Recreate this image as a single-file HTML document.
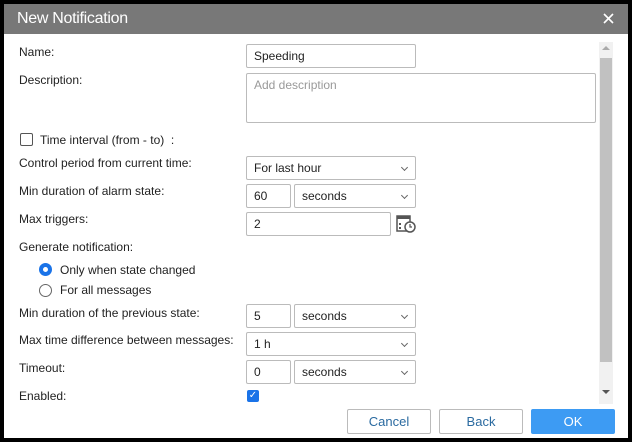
<!DOCTYPE html>
<html><head><style>
*{box-sizing:border-box;margin:0;padding:0}
body{width:632px;height:442px;background:#000;font-family:"Liberation Sans",Arial,sans-serif;font-size:12px;color:#222;position:relative;overflow:hidden}
.win{position:absolute;left:4px;top:4px;width:624px;height:434px;background:#fff}
.title{position:absolute;left:0;top:0;width:624px;height:30px;background:#787878;color:#fff;font-size:16px;line-height:29px;padding-left:13px;letter-spacing:-0.3px}
.a{position:absolute}
.lbl{position:absolute;left:15px;line-height:14px}
.in{position:absolute;border:1px solid #bbb;border-radius:2px;height:24px;line-height:22px;padding-left:7px;background:#fff}
.sel::after{content:"";position:absolute;right:8px;top:8px;width:4px;height:4px;border-right:1px solid #666;border-bottom:1px solid #666;transform:rotate(45deg)}
.btn{position:absolute;top:405px;width:84px;height:25px;border:1px solid #bbb;border-radius:2px;text-align:center;line-height:23px;color:#2a6aa0;font-size:13px}
.rad{position:absolute;width:13px;height:13px;border:1px solid #666;border-radius:50%}
</style></head><body>
<div class="win">
<div class="title">New Notification</div>
<svg class="a" style="left:599px;top:9px" width="11" height="11" viewBox="0 0 11 11"><path d="M1 1L10 10M10 1L1 10" stroke="#fff" stroke-width="1.6"/></svg>
<div class="lbl" style="top:41px">Name:</div>
<div class="in" style="left:242px;top:40px;width:170px">Speeding</div>
<div class="lbl" style="top:69px">Description:</div>
<div class="in" style="left:242px;top:69px;width:350px;height:50px;color:#999">Add description</div>
<div class="a" style="left:16px;top:129px;width:13px;height:13px;border:1px solid #555;border-radius:2px"></div>
<div class="lbl" style="left:36px;top:129px">Time interval (from - to) &nbsp;:</div>
<div class="lbl" style="top:152px">Control period from current time:</div>
<div class="in sel" style="left:242px;top:152px;width:170px">For last hour</div>
<div class="lbl" style="top:180px">Min duration of alarm state:</div>
<div class="in" style="left:242px;top:180px;width:45px">60</div>
<div class="in sel" style="left:290px;top:180px;width:122px">seconds</div>
<div class="lbl" style="top:208px">Max triggers:</div>
<div class="in" style="left:242px;top:208px;width:145px">2</div>
<svg class="a" style="left:392px;top:210px" width="20" height="20" viewBox="0 0 20 20"><rect x="1" y="2" width="13" height="15" fill="#fff" stroke="#555" stroke-width="1.5"/><rect x="1" y="2" width="13" height="3" fill="#555"/><rect x="3" y="9" width="2" height="2" fill="#555"/><rect x="3" y="13" width="2" height="2" fill="#555"/><circle cx="14" cy="13" r="5" fill="#fff" stroke="#555" stroke-width="1.5"/><path d="M14 10v3h2" stroke="#555" fill="none" stroke-width="1.2"/></svg>
<div class="lbl" style="top:236px">Generate notification:</div>
<div class="rad" style="left:35px;top:259px;border:4px solid #1a73e8"></div>
<div class="lbl" style="left:56px;top:259px">Only when state changed</div>
<div class="rad" style="left:35px;top:280px"></div>
<div class="lbl" style="left:56px;top:279px">For all messages</div>
<div class="lbl" style="top:302px">Min duration of the previous state:</div>
<div class="in" style="left:242px;top:300px;width:45px">5</div>
<div class="in sel" style="left:290px;top:300px;width:122px">seconds</div>
<div class="lbl" style="top:329px">Max time difference between messages:</div>
<div class="in sel" style="left:242px;top:328px;width:170px">1 h</div>
<div class="lbl" style="top:357px">Timeout:</div>
<div class="in" style="left:242px;top:356px;width:45px">0</div>
<div class="in sel" style="left:290px;top:356px;width:122px">seconds</div>
<div class="lbl" style="top:385px">Enabled:</div>
<div class="a" style="left:243px;top:386px;width:12px;height:12px;background:#1a73e8;border-radius:2px;color:#fff;font-size:10px;line-height:12px;text-align:center">✓</div>
<div class="a" style="left:595px;top:38px;width:14px;height:362px;background:#f1f1f1"></div>
<div class="a" style="left:596px;top:54px;width:12px;height:304px;background:#c1c1c1"></div>
<div class="a" style="left:598px;top:42px;width:0;height:0;border:4px solid transparent;border-bottom-color:#aaa;border-top:0"></div>
<div class="a" style="left:598px;top:386px;width:0;height:0;border:4px solid transparent;border-top-color:#555;border-bottom:0"></div>
<div class="btn" style="left:343px">Cancel</div>
<div class="btn" style="left:435px">Back</div>
<div class="btn" style="left:527px;background:#3d9bf3;border-color:#3d9bf3;color:#fff">OK</div>
</div>
</body></html>
